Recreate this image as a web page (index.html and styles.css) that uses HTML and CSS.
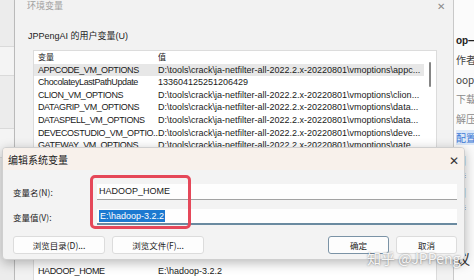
FILE: index.html
```html
<!DOCTYPE html>
<html lang="zh-CN">
<head>
  <meta charset="UTF-8">
  <meta name="viewport" content="width=device-width, initial-scale=1.0">
  <title>环境变量</title>
  <link rel="stylesheet" href="styles.css">
</head>
<body>

  <div class="desk">
    <div class="side-left">
      <div class="side-box"></div>
      <div class="side-box"></div>
    </div>

    <div class="envwin">
      <div class="env-title">
        <span>环境变量</span>
        <span class="env-close">✕</span>
      </div>
      <div class="env-label">JPPengAI 的用户变量(U)</div>
      <div class="list">
        <div class="rows">
          <div class="row head"><span class="c1 cjk">变量</span><span class="c2 cjk">值</span></div>
          <div class="row sel"><span class="c1">APPCODE_VM_OPTIONS</span><span class="c2">D:\tools\crack\ja-netfilter-all-2022.2.x-20220801\vmoptions\appc...</span></div>
          <div class="row"><span class="c1">ChocolateyLastPathUpdate</span><span class="c2">133604125251206429</span></div>
          <div class="row"><span class="c1">CLION_VM_OPTIONS</span><span class="c2">D:\tools\crack\ja-netfilter-all-2022.2.x-20220801\vmoptions\clion...</span></div>
          <div class="row"><span class="c1">DATAGRIP_VM_OPTIONS</span><span class="c2">D:\tools\crack\ja-netfilter-all-2022.2.x-20220801\vmoptions\data...</span></div>
          <div class="row"><span class="c1">DATASPELL_VM_OPTIONS</span><span class="c2">D:\tools\crack\ja-netfilter-all-2022.2.x-20220801\vmoptions\data...</span></div>
          <div class="row"><span class="c1">DEVECOSTUDIO_VM_OPTIO...</span><span class="c2">D:\tools\crack\ja-netfilter-all-2022.2.x-20220801\vmoptions\deve...</span></div>
          <div class="row"><span class="c1">GATEWAY_VM_OPTIONS</span><span class="c2">D:\tools\crack\ja-netfilter-all-2022.2.x-20220801\vmoptions\gate...</span></div>
          <div class="row"><span class="c1">GIT_HOME</span><span class="c2">D:\tools\Git</span></div>
          <div class="row"><span class="c1">GOLAND_VM_OPTIONS</span><span class="c2">D:\tools\crack\ja-netfilter-all-2022.2.x-20220801\vmoptions\gola...</span></div>
          <div class="row"><span class="c1">GOPATH</span><span class="c2">D:\go\path</span></div>
          <div class="row"><span class="c1">GOROOT</span><span class="c2">D:\go</span></div>
          <div class="row"><span class="c1">GRADLE_HOME</span><span class="c2">D:\tools\gradle</span></div>
          <div class="row"><span class="c1">GRADLE_REPO</span><span class="c2">D:\tools\gradle\repo</span></div>
          <div class="row"><span class="c1">GRADLE_USER_HOME</span><span class="c2">D:\tools\gradle\repo</span></div>
          <div class="row"><span class="c1">GROOVY_HOME</span><span class="c2">D:\tools\groovy</span></div>
          <div class="row"></div>
          <div class="row"><span class="c1">HADOOP_HOME</span><span class="c2">E:\hadoop-3.2.2</span></div>
        </div>
        <div class="scroll"><div class="thumb"></div></div>
      </div>
    </div>

    <div class="side-right">
      <div class="top-block">
        <p class="b">op—</p>
        <p>作者</p>
        <p>oope</p>
        <p class="g">下载</p>
        <p class="g">解压</p>
        <p class="blue"><span>配置</span></p>
      </div>
      <div class="mid-block">
        <p>则</p>
        <p>持</p>
        <p>则</p>
        <p>持</p>
        <p>目</p>
      </div>
      <p class="big">议</p>
    </div>
  </div>

  <div class="dialog">
    <div class="dlg-title">
      <span>编辑系统变量</span>
      <span class="dlg-close">✕</span>
    </div>
    <div class="dlg-body">
      <div class="fields">
        <div class="field">
          <label>变量名(N):</label>
          <div class="input"><span>HADOOP_HOME</span></div>
        </div>
        <div class="field">
          <label>变量值(V):</label>
          <div class="input focus"><span class="selected">E:\hadoop-3.2.2</span></div>
        </div>
        <div class="mark"></div>
      </div>
      <div class="buttons">
        <button class="btn wide">浏览目录(D)...</button>
        <button class="btn wide">浏览文件(F)...</button>
        <span class="spacer"></span>
        <button class="btn ok">确定</button>
        <button class="btn">取消</button>
      </div>
    </div>
  </div>

  <div class="watermark">知乎 @JPPeng</div>

</body>
</html>
```

FILE: styles.css
```css
* {
  box-sizing: border-box;
}
body {
  margin: 0;
  width: 474px;
  height: 280px;
  overflow: hidden;
  position: relative;
  font-family: "Liberation Sans", "Noto Sans CJK SC", sans-serif;
  font-size: 9px;
  color: #1a1a1a;
  background-color: #d6d6d6;
}
.desk {
  display: flex;
  height: 280px;
}

/* window behind, left */
.side-left {
  width: 15px;
  background-color: #ececec;
  border-right: 1px solid #bdbdbd;
  padding-top: 46px;
}
.side-box {
  height: 30px;
  margin-bottom: 52px;
  border-top: 1px solid #dadada;
  border-bottom: 1px solid #dadada;
  background-color: #f4f4f4;
}

/* 环境变量 window */
.envwin {
  width: 439px;
  background-color: #f2f2f2;
  border-right: 1px solid #c9c9c9;
  box-shadow: 2px 0 4px rgba(0, 0, 0, 0.12);
}
.env-title {
  height: 22px;
  display: flex;
  justify-content: space-between;
  padding: 0 8px 0 12px;
  color: #a0a0a0;
  font-family: "Noto Sans CJK SC", sans-serif;
  font-size: 9px;
  line-height: 11px;
}
.env-close {
  font-size: 10px;
  color: #8a8a8a;
}
.env-label {
  padding-left: 13px;
  height: 28px;
  line-height: 28px;
  color: #222;
}
.list {
  display: flex;
  margin-left: 18px;
  width: 404px;
  height: 240px;
  background-color: #fff;
  border: 1px solid #dcdcdc;
}
.rows {
  flex: 1;
}
.row {
  display: flex;
  height: 12.6px;
  line-height: 12.6px;
  white-space: nowrap;
  overflow: hidden;
}
.row.sel {
  background-color: #e7e7e7;
}
.c1 {
  width: 124px;
  padding-left: 4px;
  letter-spacing: -0.4px;
  overflow: hidden;
}
.c2 {
  flex: 1;
  overflow: hidden;
}
.cjk {
  font-family: "Noto Sans CJK SC", sans-serif;
  font-size: 8px;
  letter-spacing: 0;
}
.scroll {
  width: 12px;
  padding: 11px 0 0 5px;
}
.thumb {
  width: 2px;
  height: 25px;
  border-radius: 1px;
  background-color: #858585;
}

/* web page behind, right */
.side-right {
  flex: 1;
  display: flex;
  flex-direction: column;
  background-color: #fbfbfb;
  padding: 31px 0 0 2px;
  overflow: hidden;
  font-family: "Noto Sans CJK SC", sans-serif;
  font-size: 10px;
  color: #444;
}
.side-right p {
  margin: 0;
  white-space: nowrap;
}
.top-block {
  line-height: 19.4px;
}
.mid-block {
  margin-top: 6px;
  line-height: 15.8px;
  color: #777;
}
.side-right .b {
  font-family: "Liberation Sans", sans-serif;
  font-weight: bold;
  color: #222;
}
.side-right .g {
  color: #8a8a8a;
}
.side-right .blue span {
  color: #3d7ad6;
  background-color: #dce8f8;
}
.side-right .big {
  margin-top: 17px;
  font-size: 14px;
  line-height: 18px;
  color: #333;
}

/* 编辑系统变量 dialog */
.dialog {
  position: absolute;
  left: 2px;
  top: 147px;
  width: 463px;
  height: 113px;
  background-color: #f3f3f3;
  border: 1px solid #cfcfcf;
  border-radius: 4px;
  box-shadow: 0 3px 12px rgba(0, 0, 0, 0.28);
  overflow: hidden;
}
.dlg-title {
  height: 22px;
  display: flex;
  justify-content: space-between;
  align-items: center;
  padding: 0 5px 0 5px;
  background-color: #f8f1eb;
  font-family: "Noto Sans CJK SC", sans-serif;
  font-size: 10px;
  color: #222;
}
.dlg-close {
  font-size: 12px;
  color: #333;
}
.dlg-body {
  padding: 14px 7px 0 10px;
}
.fields {
  position: relative;
  display: flex;
  flex-direction: column;
  gap: 9px;
}
.field {
  display: flex;
  align-items: center;
}
.field label {
  width: 84px;
  font-family: "Noto Sans CJK SC", sans-serif;
  font-size: 8.5px;
  color: #222;
}
.input {
  flex: 1;
  height: 16px;
  background-color: #fefefe;
  border-bottom: 1px solid #a3a3a3;
  padding-left: 2px;
  line-height: 15px;
}
.input.focus {
  border-bottom: 2px solid #6a8aa0;
}
.selected {
  background-color: #1c79d0;
  color: #fff;
  padding: 1px 1px;
}
.mark {
  position: absolute;
  left: 77px;
  top: -9px;
  width: 101px;
  height: 54px;
  border: 3px solid #e5485a;
  border-radius: 5px;
}
.buttons {
  display: flex;
  gap: 7px;
  margin-top: 11px;
}
.btn {
  width: 61px;
  height: 18px;
  padding: 0;
  background-color: #fdfdfd;
  border: 1px solid #dcdcdc;
  border-radius: 3px;
  font-family: "Noto Sans CJK SC", sans-serif;
  font-size: 8.5px;
  color: #222;
}
.btn.wide {
  width: 92px;
}
.btn.ok {
  border: 1px solid #7b93a6;
}
.spacer {
  flex: 1;
}

.watermark {
  position: absolute;
  left: 367px;
  top: 248px;
  font-family: "Noto Sans CJK SC", sans-serif;
  font-size: 14px;
  color: rgba(255, 255, 255, 0.92);
  text-shadow: 0 0 2px rgba(0, 0, 0, 0.5);
}
```
